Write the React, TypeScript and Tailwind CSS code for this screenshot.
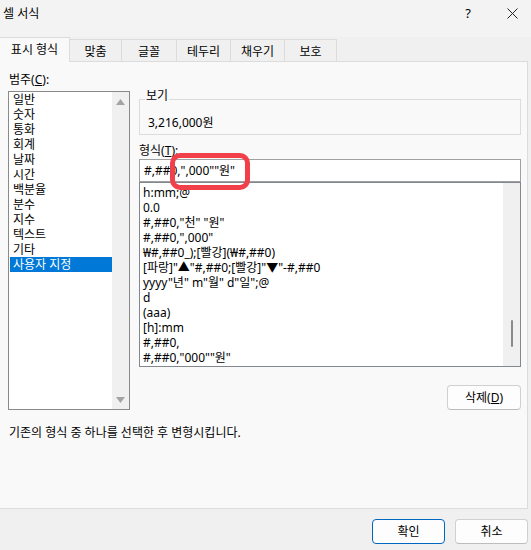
import React from "react"

const categories = ["일반", "숫자", "통화", "회계", "날짜", "시간", "백분율", "분수", "지수", "텍스트", "기타", "사용자 지정"]

const formats = [
  "h:mm;@",
  "0.0",
  '#,##0,"천" "원"',
  '#,##0,",000"',
  "₩#,##0_);[빨강](₩#,##0)",
  '[파랑]"▲"#,##0;[빨강]"▼"-#,##0',
  'yyyy"년" m"월" d"일";@',
  "d",
  "(aaa)",
  "[h]:mm",
  "#,##0,",
  '#,##0,"000""원"',
]

const tabs = [
  { label: "맞춤", w: "w-[52px]" },
  { label: "글꼴", w: "w-[55px]" },
  { label: "테두리", w: "w-[54px]" },
  { label: "채우기", w: "w-[54px]" },
  { label: "보호", w: "w-[52px]" },
]

const Arrow = ({ up }: { up?: boolean }) => (
  <svg width="9" height="6" viewBox="0 0 9 6">
    <path d={up ? "M4.5 0 L9 6 L0 6 Z" : "M0 0 L9 0 L4.5 6 Z"} fill="#a3a3a3" />
  </svg>
)

export default function App() {
  return (
    <div className="w-[531px] h-[550px] bg-[#f0f0f0] text-[12px] leading-[15px] text-black font-['Noto_Sans','Noto_Sans_CJK_KR',sans-serif] overflow-hidden">
      {/* title */}
      <div className="h-[37px] bg-[#f3f3f3] flex items-start pt-[6px] pl-[3px]">
        <span>셀 서식</span>
        <span className="ml-auto mr-[36px] text-[13px]">?</span>
        <svg width="11" height="11" viewBox="0 0 11 11" className="mt-[2px] mr-[13px]">
          <path d="M0.5 0.5 L10.5 10.5 M10.5 0.5 L0.5 10.5" stroke="#222" strokeWidth="1" />
        </svg>
      </div>

      {/* tabs */}
      <div className="h-[24px] flex items-end">
        <div className="relative z-10 -mb-px w-[70px] h-[25px] bg-[#f9f9f9] border-t border-r border-[#dcdcdc] flex items-center justify-center pb-[1px]">
          표시 형식
        </div>
        {tabs.map((t) => (
          <div key={t.label} className={`${t.w} h-[22px] border-t border-r border-[#dcdcdc] flex items-center justify-center pt-[1px]`}>
            {t.label}
          </div>
        ))}
      </div>

      {/* panel */}
      <div className="w-[528px] h-[448px] bg-[#f9f9f9] border-t border-r border-b border-[#dcdcdc] pl-[8px]">
        <div className="flex">
          {/* left column */}
          <div className="w-[122px] pt-[10px]">
            <div className="pl-[1px]">
              범주(<span className="underline">C</span>):
            </div>
            <div className="mt-[4px] h-[319px] border border-[#8a8a8a] bg-white flex">
              <div className="flex-1 pl-[1px]">
                {categories.map((c, i) => (
                  <div
                    key={c}
                    className={`h-[15px] pl-[3px] whitespace-nowrap ${i === categories.length - 1 ? "bg-[#0078d7] text-white" : ""}`}
                  >
                    {c}
                  </div>
                ))}
              </div>
              <div className="w-[17px] bg-[#f0f0f0] flex flex-col items-center justify-between pt-[7px] pb-[6px]">
                <Arrow up />
                <Arrow />
              </div>
            </div>
          </div>

          {/* right column */}
          <div className="w-[382px] ml-[9px] pt-[37px]">
            <div className="relative h-[36px] border border-[#dcdcdc] pl-[8px] pt-[15px]">
              <span className="absolute -top-[12px] left-[5px] px-[1px] bg-[#f9f9f9]">보기</span>
              3,216,000원
            </div>
            <div className="mt-[8px]">
              형식(<span className="underline">T</span>):
            </div>
            <div className="relative mt-[1px] h-[23px] border border-[#a0a0a0] bg-white pl-[4px] flex items-center">
              #,##0,",000""원"
              <div className="absolute z-10 left-[30px] -top-[7px] w-[80px] h-[37px] border-[5px] border-[#f2404b] rounded-[10px]" />
            </div>
            <div className="h-[185px] border border-[#828790] bg-white flex">
              <div className="flex-1 pl-[3px] pt-[2px]">
                {formats.map((f) => (
                  <div key={f} className="h-[15px] whitespace-nowrap">
                    {f}
                  </div>
                ))}
              </div>
              <div className="w-[17px] bg-[#f0f0f0] flex flex-col items-center pt-[137px]">
                <div className="w-[2px] h-[27px] rounded-full bg-[#8a8a8a]" />
              </div>
            </div>
            <div className="flex justify-end mt-[18px]">
              <button className="w-[74px] h-[25px] bg-[#fdfdfd] border border-[#d0d0d0] border-b-[#bdbdbd] rounded-[4px]">
                삭제(<span className="underline">D</span>)
              </button>
            </div>
          </div>
        </div>
        <div className="mt-[15px] pl-[1px]">기존의 형식 중 하나를 선택한 후 변형시킵니다.</div>
      </div>

      {/* bottom buttons */}
      <div className="flex justify-end gap-[10px] pr-[3px] mt-[10px]">
        <button className="w-[73px] h-[25px] bg-[#fdfdfd] border border-[#0067c0] rounded-[4px]">확인</button>
        <button className="w-[73px] h-[25px] bg-[#fdfdfd] border border-[#d0d0d0] border-b-[#bdbdbd] rounded-[4px]">취소</button>
      </div>
    </div>
  )
}
